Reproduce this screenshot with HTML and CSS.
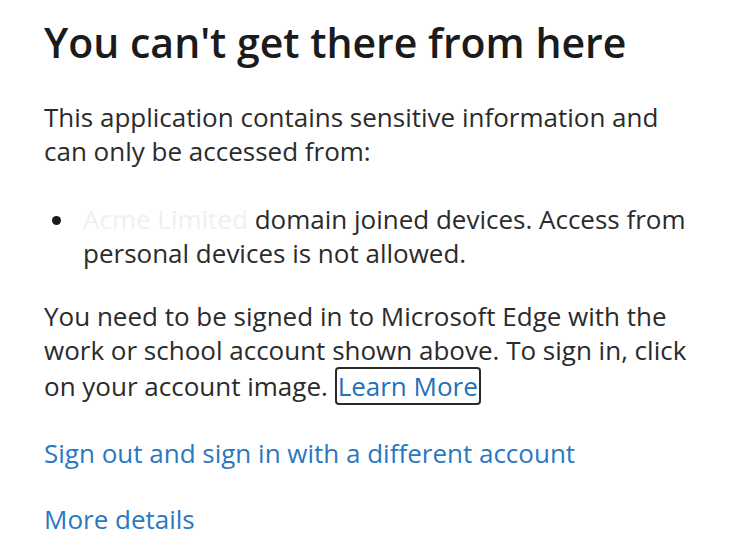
FILE: index.html
```html
<!DOCTYPE html>
<html lang="en">

<head>
    <meta charset="UTF-8">
    <meta name="viewport" content="width=device-width, initial-scale=1.0">
    <title>You can't get there from here</title>
    <link rel="stylesheet" href="styles.css">
</head>

<body>
    <div class="error-box">
        <h1 class="title">You can't get there from here</h1>

        <p class="text">This application contains sensitive information and<br>can only be accessed from:</p>

        <ul class="device-list">
            <li><span class="item-text"><span class="redacted">Acme Limited</span> domain joined devices. Access from<br>personal devices is not allowed.</span></li>
        </ul>

        <p class="text text-signin">You need to be signed in to Microsoft Edge with the<br>work or school account shown above. To sign in, click<br>on your account image. <a class="learn-more" href="#">Learn More</a></p>

        <p class="action action-first"><a href="#">Sign out and sign in with a different account</a></p>

        <p class="action"><a href="#">More details</a></p>
    </div>
</body>

</html>
```

FILE: styles.css
```css
body {
    margin: 0;
    background-color: #ffffff;
    color: #1b1b1b;
    font-family: "Segoe UI", "Open Sans", "Noto Sans", sans-serif;
}

.error-box {
    width: 690px;
    padding: 16px 0 0 44px;
}

.title {
    margin: 0;
    font-size: 41px;
    font-weight: 600;
    line-height: 52px;
    color: #1b1b1b;
}

.text {
    margin: 32px 0 0 0;
    font-size: 26px;
    line-height: 34px;
    color: #2b2b2b;
}

.text-signin {
    margin-top: 29px;
}

/* list with a drawn dot instead of the default marker */
.device-list {
    list-style: none;
    margin: 34px 0 0 0;
    padding-left: 8px;
    font-size: 26px;
    line-height: 34px;
    color: #2b2b2b;
}

.device-list li {
    display: flex;
    gap: 22px;
}

.device-list li::before {
    content: "";
    flex: none;
    width: 9px;
    height: 9px;
    margin-top: 14px;
    border-radius: 50%;
    background-color: #1b1b1b;
}

.redacted {
    color: #f0f0f0;
}

.learn-more {
    display: inline-block;
    line-height: 34px;
    color: #1f70bd;
    text-decoration: none;
    border: 2px solid #2b2b2b;
    border-radius: 4px;
    padding: 0 1px;
}

.action {
    margin: 32px 0 0 0;
    font-size: 26px;
    line-height: 34px;
}

.action-first {
    margin-top: 31px;
}

.action a {
    color: #2a78c2;
    text-decoration: none;
}
```
